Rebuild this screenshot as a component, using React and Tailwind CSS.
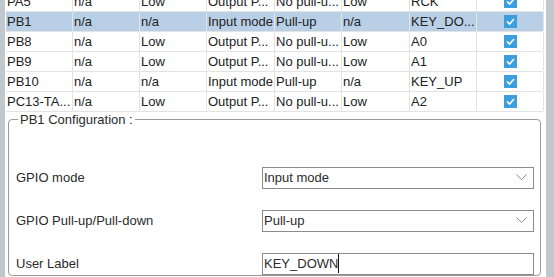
import React from 'react';

// Filas de la tabla de pines (la primera queda medio cortada arriba)
const pins = [
    ['PA5', 'n/a', 'Low', 'Output P...', 'No pull-u...', 'Low', 'RCK'],
    ['PB1', 'n/a', 'n/a', 'Input mode', 'Pull-up', 'n/a', 'KEY_DO...'],
    ['PB8', 'n/a', 'Low', 'Output P...', 'No pull-u...', 'Low', 'A0'],
    ['PB9', 'n/a', 'Low', 'Output P...', 'No pull-u...', 'Low', 'A1'],
    ['PB10', 'n/a', 'n/a', 'Input mode', 'Pull-up', 'n/a', 'KEY_UP'],
    ['PC13-TA...', 'n/a', 'Low', 'Output P...', 'No pull-u...', 'Low', 'A2'],
];

function Check() {
    return (
        <svg width="13" height="13" viewBox="0 0 13 13">
            <rect width="13" height="13" fill="#3c9fdd" />
            <polyline points="3,6.5 5.5,9 10,4" fill="none" stroke="#ffffff" strokeWidth="1.6" />
        </svg>
    );
}

function Chevron() {
    return (
        <svg width="11" height="7" viewBox="0 0 11 7" className="shrink-0">
            <polyline points="0.5,0.5 5.5,5.5 10.5,0.5" fill="none" stroke="#8a8a8a" strokeWidth="1" />
        </svg>
    );
}

function SelectBox({ value }) {
    return (
        <div className="h-[22px] flex items-center justify-between border border-[#8c8c8c] bg-white pl-[1px] pr-[6px]">
            <span>{value}</span>
            <Chevron />
        </div>
    );
}

export default function App() {
    return (
        <div className="h-[277px] w-[554px] overflow-hidden flex bg-white text-[13px] text-[#222] font-['Liberation_Sans',Arial,sans-serif]">
            <div className="w-[5px] shrink-0 bg-[#c1c8cd]" />

            <div className="flex-1 flex flex-col">
                <div className="mt-[-8px] ml-[1px] w-[537px]">
                    {pins.map((row, i) => (
                        <div
                            key={i}
                            className={
                                "grid grid-cols-[67px_67px_67px_68px_67px_68px_67px_67px] h-[20px] border-b border-[#e3e3e3] " +
                                (i === 1 ? "bg-[#b9cfe6]" : "")
                            }
                        >
                            {row.map((cell, j) => (
                                <div key={j} className="pl-[1px] flex items-center border-r border-[#e3e3e3] whitespace-nowrap overflow-hidden">
                                    {cell}
                                </div>
                            ))}
                            <div className="flex items-center justify-center border-r border-[#e3e3e3]">
                                <Check />
                            </div>
                        </div>
                    ))}
                </div>

                <fieldset className="mt-[-2px] ml-[3px] mr-[5px] border border-[#9a9a9a] rounded-[4px] pl-[7px] pr-[6px]">
                    <legend className="ml-[2px] px-[2px] text-[#2b2b2b]">PB1 Configuration :</legend>
                    <div className="mt-[37px] flex flex-col gap-[21px] text-[#2b2b2b]">
                        <div className="grid grid-cols-[246px_1fr] items-center">
                            <span>GPIO mode</span>
                            <SelectBox value="Input mode" />
                        </div>
                        <div className="grid grid-cols-[246px_1fr] items-center">
                            <span>GPIO Pull-up/Pull-down</span>
                            <SelectBox value="Pull-up" />
                        </div>
                        <div className="grid grid-cols-[246px_1fr] items-center">
                            <span>User Label</span>
                            <div className="h-[22px] flex items-center border border-[#8c8c8c] bg-white pl-[1px]">
                                <span>KEY_DOWN</span>
                                <span className="w-[1px] h-[19px] bg-[#111]" />
                            </div>
                        </div>
                    </div>
                </fieldset>
            </div>

            <div className="w-[8px] shrink-0 bg-[#c1c8cd]" />
        </div>
    );
}
